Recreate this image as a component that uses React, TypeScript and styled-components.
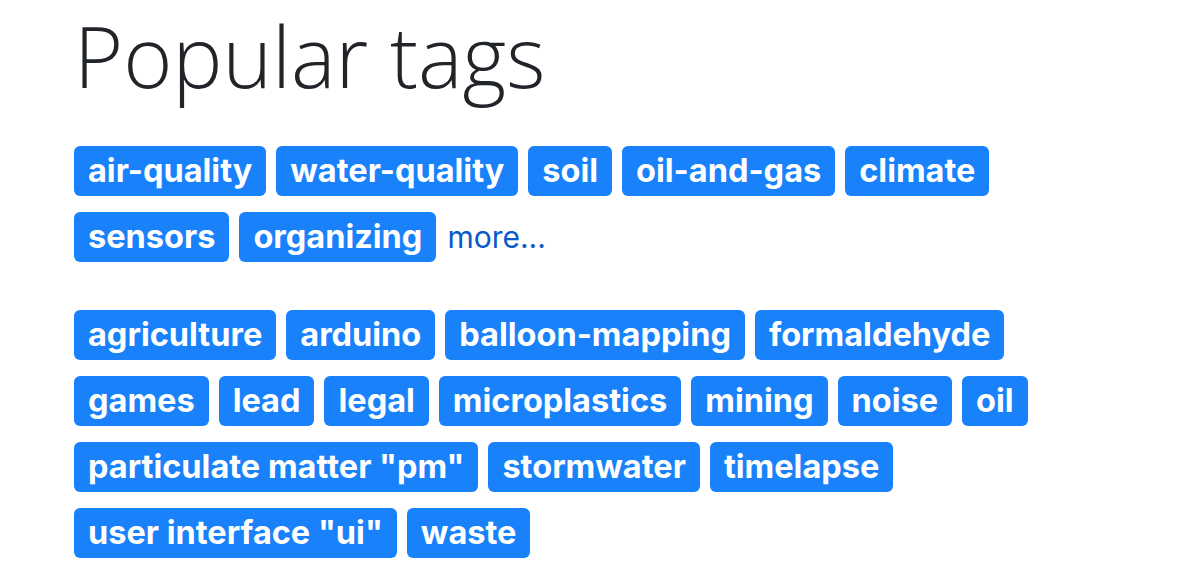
import React from "react";
import styled, { createGlobalStyle } from "styled-components";

const Global = createGlobalStyle`
  html, body { margin: 0; padding: 0; background: #fff; }
  body { font-family: Inter, "Noto Sans", sans-serif; color: #212529; }
`;

const Page = styled.div`
  padding: 0 74px;
`;

const Heading = styled.h1`
  margin: -3px 0 31px;
  font-family: "Open Sans", sans-serif;
  font-weight: 300;
  font-size: 84px;
  line-height: 1.4;
  color: #212529;
`;

const TagGroup = styled.div<{ $spaced?: boolean }>`
  display: flex;
  flex-wrap: wrap;
  align-items: center;
  column-gap: 10px;
  row-gap: 16px;
  margin-top: ${(p) => (p.$spaced ? "48px" : "0")};
`;

const Tag = styled.a`
  display: inline-block;
  background: #1982fb;
  color: #fff;
  font-family: Inter, sans-serif;
  font-weight: 700;
  font-size: 32.5px;
  line-height: 30px;
  padding: 10px 14px;
  border-radius: 6px;
  text-decoration: none;
  white-space: nowrap;
`;

const More = styled.a`
  font-family: Inter, sans-serif;
  font-size: 30px;
  line-height: 50px;
  color: #0a58ca;
  text-decoration: none;
  margin-left: 1px;
`;

const popular = ["air-quality", "water-quality", "soil", "oil-and-gas", "climate", "sensors", "organizing"];
const others = [
  "agriculture",
  "arduino",
  "balloon-mapping",
  "formaldehyde",
  "games",
  "lead",
  "legal",
  "microplastics",
  "mining",
  "noise",
  "oil",
  'particulate matter "pm"',
  "stormwater",
  "timelapse",
  'user interface "ui"',
  "waste",
];

export default function App() {
  return (
    <>
      <Global />
      <Page>
        <Heading>Popular tags</Heading>
        <TagGroup>
          {popular.map((t) => (
            <Tag key={t} href="#">{t}</Tag>
          ))}
          <More href="#">more...</More>
        </TagGroup>
        <TagGroup $spaced>
          {others.map((t) => (
            <Tag key={t} href="#">{t}</Tag>
          ))}
        </TagGroup>
      </Page>
    </>
  );
}
